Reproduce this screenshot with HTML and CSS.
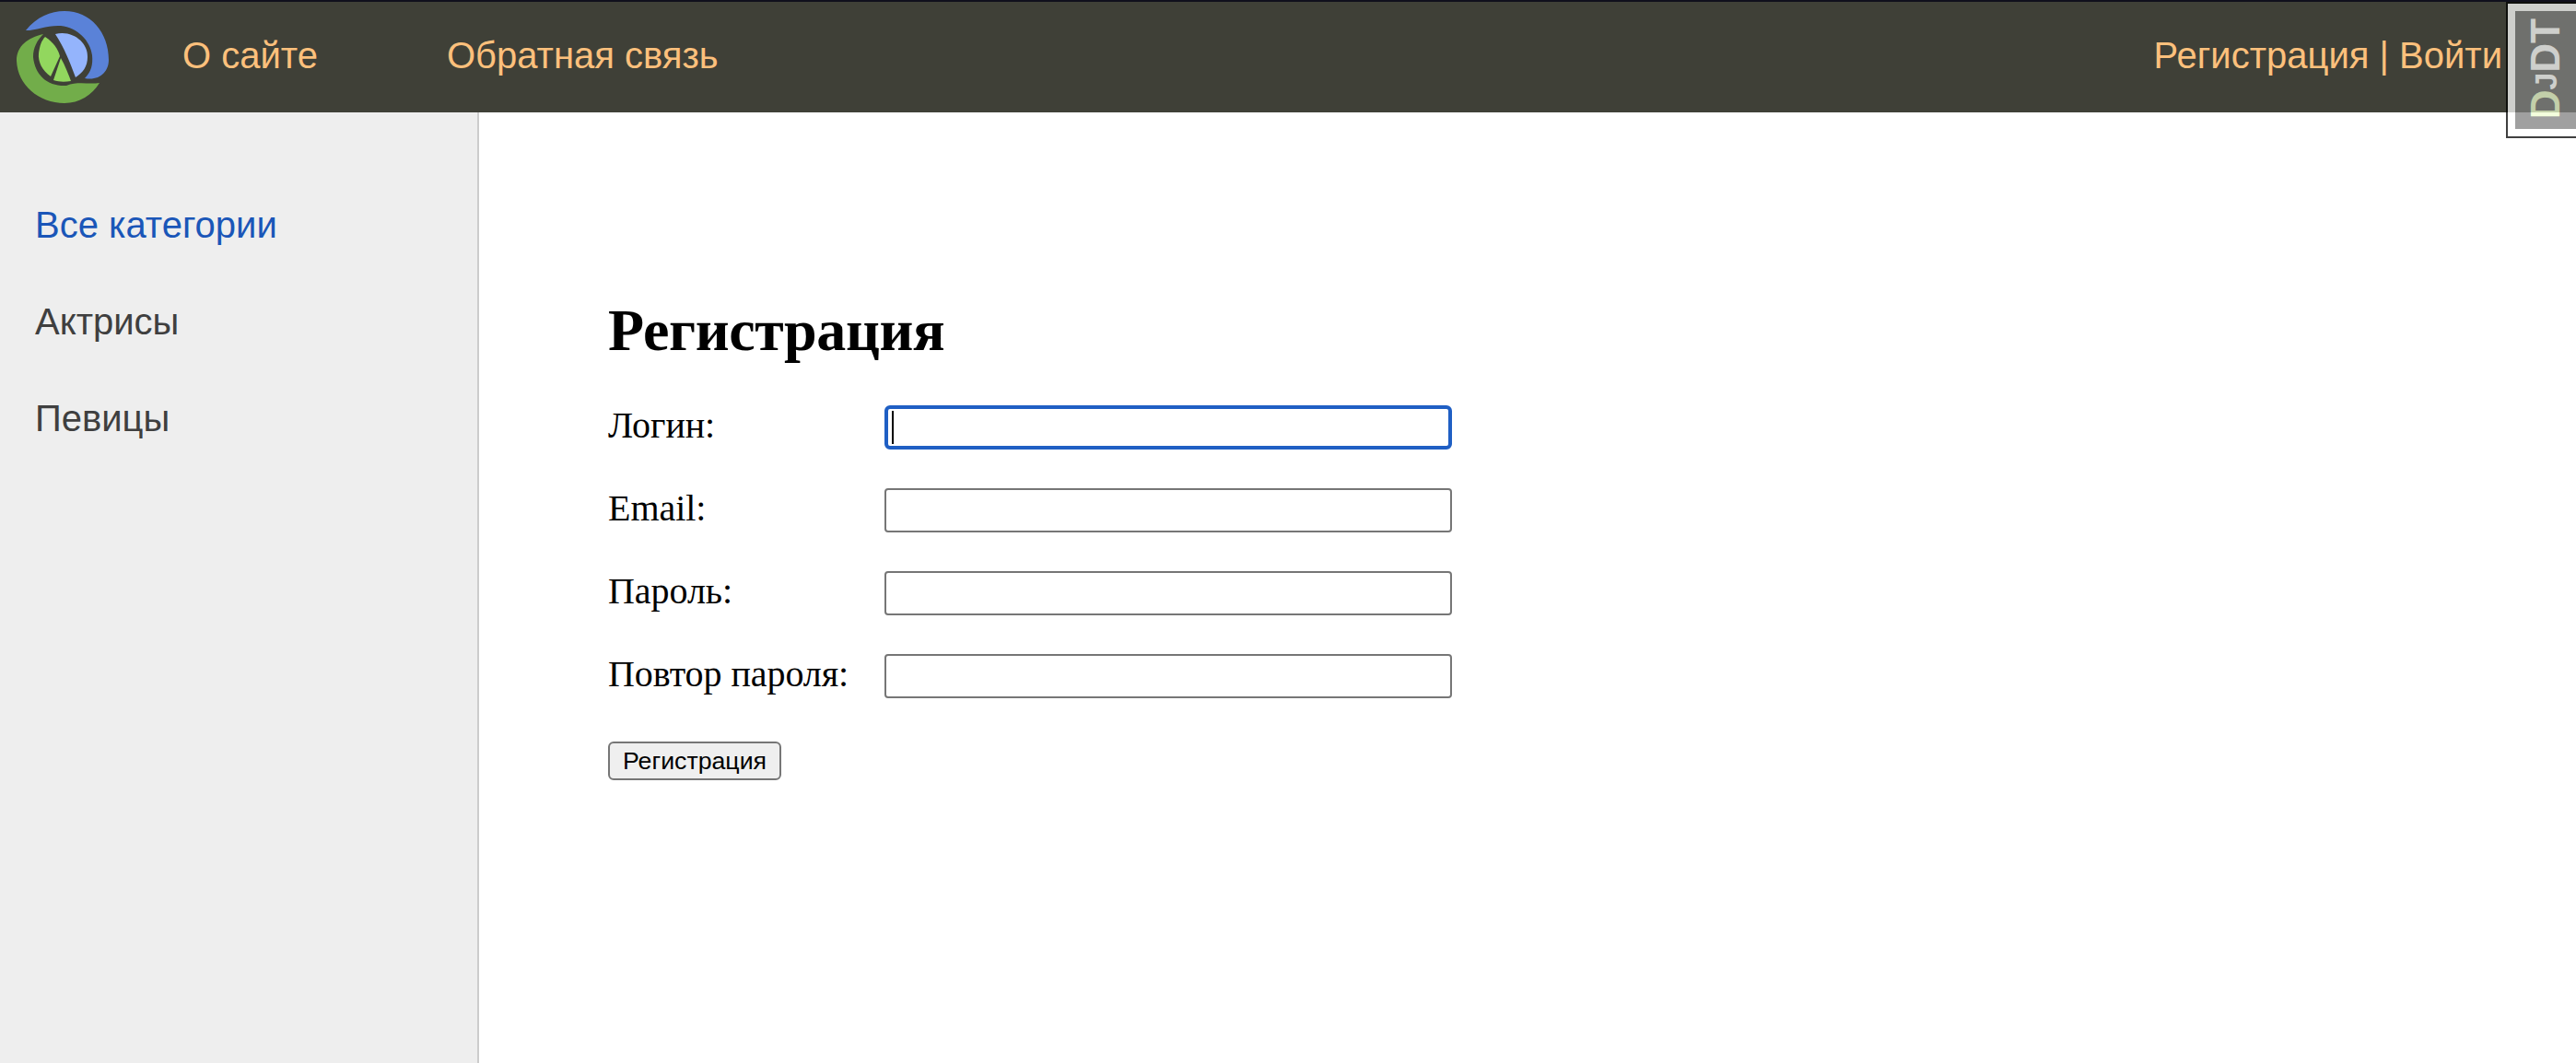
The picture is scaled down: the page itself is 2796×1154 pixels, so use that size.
FILE: index.html
```html
<!DOCTYPE html>
<html lang="ru">
<head>
<meta charset="utf-8">
<title>Регистрация</title>
<link rel="stylesheet" href="styles.css">
</head>
<body>
<header class="topbar">
  <svg class="logo" viewBox="0 0 136 122" width="136" height="122">
    <path fill="#5a82d8" d="M28 33C40 18 55 12 70 12C98 12 118 35 118 65C118 78 108 88 92 85C99 78 101 70 100 60C98 44 84 30 66 28C52 27 40 33 28 33Z"/>
    <path fill="#72ad4a" d="M47 37C30 41 18 50 18 66C19 92 42 112 70 112C86 112 100 103 108 90C96 92 85 88 72 93C52 94 38 82 36 62C36 52 40 44 47 37Z"/>
    <path fill="#94b4fc" d="M60 37C78 32 96 46 95 62C95 72 90 79 82 84C76 68 70 52 60 37Z"/>
    <path fill="#92d75e" d="M49 40C58 46 63 53 65 61L55 83C46 77 41 67 42 58C43 50 45 44 49 40Z"/>
    <path fill="#92d75e" d="M66 63C71 72 74 80 77 88C70 89 64 89 58 87Z"/>
  </svg>
  <nav class="mainnav">
    <a href="#">О сайте</a>
    <a href="#">Обратная связь</a>
  </nav>
  <div class="auth"><a href="#">Регистрация</a> | <a href="#">Войти</a></div>
</header>
<div class="layout">
  <aside class="sidebar">
    <a class="cat cat-active" href="#">Все категории</a>
    <a class="cat" href="#">Актрисы</a>
    <a class="cat" href="#">Певицы</a>
  </aside>
  <main class="content">
    <h1 class="title">Регистрация</h1>
    <form class="form">
      <div class="row"><label class="label" for="a">Логин:</label><span class="field-wrap"><input class="field field-focus" id="a" type="text"><span class="caret"></span></span></div>
      <div class="row"><label class="label" for="b">Email:</label><span class="field-wrap"><input class="field" id="b" type="text"></span></div>
      <div class="row"><label class="label" for="c">Пароль:</label><span class="field-wrap"><input class="field" id="c" type="password"></span></div>
      <div class="row"><label class="label" for="d">Повтор пароля:</label><span class="field-wrap"><input class="field" id="d" type="password"></span></div>
      <button class="submit" type="button">Регистрация</button>
    </form>
  </main>
</div>
<div class="djdt"><div class="djdt-inner"><span class="djdt-text"><span class="djdt-d">D</span><span class="djdt-j">J</span>DT</span></div></div>
</body>
</html>
```
FILE: styles.css
```css
* { box-sizing: border-box; }
html, body { margin: 0; height: 100%; }
body { background: #fff; color: #000; font-family: "Liberation Serif", serif; display: flex; flex-direction: column; overflow: hidden; }
a { text-decoration: none; }
.topbar { height: 122px; flex: none; display: flex; align-items: center; background: #3f4037; border-top: 2px solid #10101c; font-family: "Liberation Sans", sans-serif; font-size: 40px; color: #fcc07c; padding: 0 80px 4px 0; }
.topbar a { color: #fcc07c; }
.logo { flex: none; display: block; margin: -2px 0 -4px; filter: blur(.6px); }
.mainnav { display: flex; gap: 140px; margin-left: 62px; flex: 1; }
.layout { flex: 1; display: flex; min-height: 0; }
.sidebar { width: 520px; flex: none; background: #eee; border-right: 2px solid #ccc; padding-top: 99px; display: flex; flex-direction: column; gap: 59px; font-family: "Liberation Sans", sans-serif; font-size: 40px; padding-left: 38px; line-height: 46px; }
.cat { color: #3f3f3f; }
.cat-active { color: #1a56b8; }
.content { flex: 1; padding: 200px 0 0 140px; }
.title { margin: 0 0 44px; font-size: 64px; line-height: 74px; font-weight: bold; letter-spacing: -0.35px; }
.form { display: flex; flex-direction: column; align-items: flex-start; }
.row { display: flex; align-items: center; height: 48px; margin-bottom: 42px; font-size: 40px; }
.label { width: 300px; flex: none; margin-top: -6px; letter-spacing: -0.05px; }
.field-wrap { position: relative; display: block; height: 48px; }
.field { display: block; width: 616px; height: 48px; border: 2px solid #767676; border-radius: 4px; background: #fff; padding: 0; }
.field-focus { border: 4px solid #1f5fc4; border-radius: 6px; }
.caret { position: absolute; left: 8px; top: 6px; width: 2px; height: 36px; background: #000; }
.submit { display: block; width: 188px; height: 42px; border: 2px solid #767676; border-radius: 6px; background: #efefef; font-family: "Liberation Sans", sans-serif; font-size: 26.7px; color: #000; padding: 0; margin-top: 5px; }
.djdt { position: fixed; top: 2px; right: 0; width: 76px; height: 148px; border: 2px solid #000; border-right: 0; background: #fff; padding: 8px 0 8px 8px; opacity: .75; }
.djdt-inner { height: 100%; background: #808080; display: flex; align-items: center; justify-content: center; padding-bottom: 3px; }
.djdt-text { writing-mode: vertical-rl; transform: rotate(180deg); font-family: "Liberation Sans", sans-serif; font-weight: bold; font-size: 44px; color: #fff; line-height: 1; }
.djdt-d { color: #f0ffd2; }
.djdt-j { font-size: 34px; color: #fff; }
```
